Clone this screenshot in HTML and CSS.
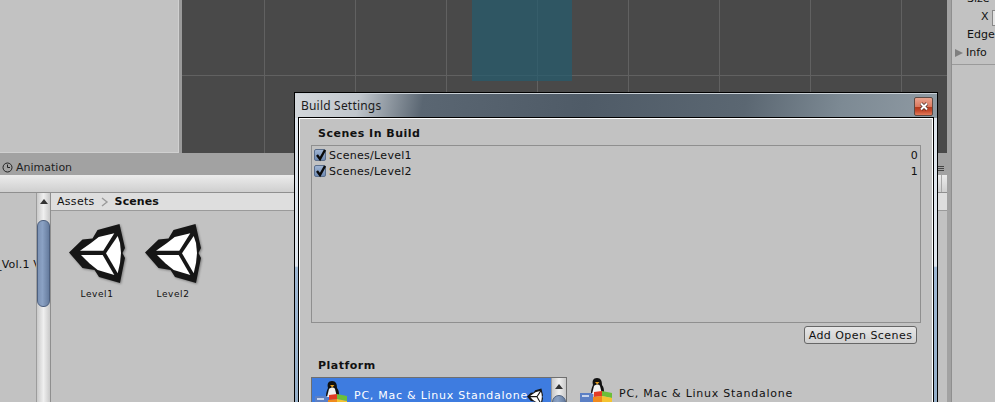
FILE: index.html
```html
<!DOCTYPE html>
<html lang="en">

<head>
	<meta charset="UTF-8">
	<title>Build Settings</title>
	<link rel="stylesheet" href="styles.css">
</head>

<body>
	<svg class="defs" width="0" height="0">
		<symbol id="unity" viewBox="0 0 56 62">
			<path fill="#161616" d="M0 29.5 L13.5 16.5 L23.5 15.5 L28.5 7 L50.5 1 L56 25 L53.5 30 L56 35 L51 60 L30 54 L25.5 47 L13.5 45 Z"/>
			<path fill="#fff" d="M11 27.7 L22 20 L29.7 14 L45.3 10.3 L34.3 27.7 Z"/>
			<path fill="#fff" d="M48.7 13 L37 30.3 L48.7 50.3 L51 40 L52 30 L51 20 Z"/>
			<path fill="#fff" d="M12 32 L33.7 32 L45.3 52 L28.7 47 L20.3 40.3 Z"/>
		</symbol>
		<symbol id="tux" viewBox="0 0 32 24">
			<path fill="#5b7fc4" d="M0 15 L13 15 V24 H0 Z"/>
			<path fill="#c7d4ec" d="M2 17 H9 V19 H2 Z"/>
			<path fill="#111" d="M17 0 C21 0 22 3 22 7 C24 9 24 12 24 15 H11 C11 12 12 9 13 7 C12 3 13 0 17 0 Z"/>
			<path fill="#f2f2f2" d="M14 8 C16 6 19 6 20 8 L22 16 H12 Z"/>
			<path fill="#e8a020" d="M15 4 H19.5 L17.2 6.5 Z"/>
			<path fill="#e33b24" d="M14 14 L22 13 V18 L14 19 Z"/>
			<path fill="#6cbf38" d="M22 13 L32 15 V20 L22 18 Z"/>
			<path fill="#f08a1d" d="M13 19 L22 18 V24 H13 Z"/>
			<path fill="#f4c430" d="M22 18 L32 20 V24 H22 Z"/>
		</symbol>
	</svg>

	<div class="editor">
		<div class="top-row">
			<div class="left-pane"></div>
			<div class="scene">
				<div class="scene-rect"></div>
			</div>
		</div>
		<div class="bottom-area">
			<div class="tab-strip">
				<svg class="clock" width="11" height="11" viewBox="0 0 11 11">
					<circle cx="5.5" cy="5.5" r="4.5" fill="none" stroke="#222"/>
					<path d="M5.5 2.5 V5.5 H8" fill="none" stroke="#222"/>
				</svg>
				<span>Animation</span>
				<svg class="tab-menu" width="6" height="5" viewBox="0 0 6 5">
					<path d="M0 .5 H6 M0 2.5 H6 M0 4.5 H6" stroke="#444"/>
				</svg>
			</div>
			<div class="toolbar"><i class="toolbar-sep"></i></div>
			<div class="browser">
				<div class="tree"><span class="tree-label">_Vol.1 V</span></div>
				<div class="tree-scroll">
					<div class="scroll-arrow"></div>
					<div class="scroll-thumb"></div>
				</div>
				<div class="assets">
					<div class="crumbs">
						<span>Assets</span>
						<svg class="crumb-sep" width="8" height="10" viewBox="0 0 8 10">
							<path d="M1 1 L6 5 L1 9" fill="none" stroke="#9a9a9a" stroke-width="1.4"/>
						</svg>
						<b>Scenes</b>
					</div>
					<div class="asset-grid">
						<div class="asset">
							<svg class="asset-icon"><use href="#unity"/></svg>
							<span>Level1</span>
						</div>
						<div class="asset">
							<svg class="asset-icon"><use href="#unity"/></svg>
							<span>Level2</span>
						</div>
					</div>
				</div>
			</div>
		</div>
		<div class="inspector">
			<div class="insp-rows">
				<div class="insp-row size">Size</div>
				<div class="insp-row axis">X<i class="field"></i></div>
				<div class="insp-row">Edge</div>
				<div class="insp-row info"><i class="fold"></i>Info</div>
			</div>
		</div>
	</div>

	<!-- the dialog floats over the editor -->
	<div class="dialog">
		<div class="titlebar">
			<span class="title">Build Settings</span>
			<div class="close-btn">
				<svg width="10" height="9" viewBox="0 0 10 9">
					<path d="M2 1.5 L8 7.5 M8 1.5 L2 7.5" stroke="#4a2a22" stroke-width="3.4"/>
					<path d="M2 1.5 L8 7.5 M8 1.5 L2 7.5" stroke="#fff" stroke-width="2"/>
				</svg>
			</div>
		</div>
		<div class="client">
			<h2 class="section">Scenes In Build</h2>
			<div class="scene-list">
				<div class="scene-row">
					<i class="check"><svg width="13" height="13" viewBox="0 0 13 13"><path d="M3 6 L6 10 L11 1" fill="none" stroke="#0a0a0a" stroke-width="2.4"/></svg></i>
					<span class="scene-name">Scenes/Level1</span>
					<span>0</span>
				</div>
				<div class="scene-row">
					<i class="check"><svg width="13" height="13" viewBox="0 0 13 13"><path d="M3 6 L6 10 L11 1" fill="none" stroke="#0a0a0a" stroke-width="2.4"/></svg></i>
					<span class="scene-name">Scenes/Level2</span>
					<span>1</span>
				</div>
			</div>
			<div class="list-actions">
				<button class="open-btn">Add Open Scenes</button>
			</div>
			<h2 class="section platform-head">Platform</h2>
			<div class="platform">
				<div class="platform-list">
					<div class="platform-item">
						<svg class="tux"><use href="#tux"/></svg>
						<span class="platform-name">PC, Mac &amp; Linux Standalone</span>
						<svg class="item-logo"><use href="#unity"/></svg>
					</div>
					<div class="platform-scroll">
						<div class="scroll-arrow"></div>
						<div class="platform-thumb"></div>
					</div>
				</div>
				<div class="platform-detail">
					<svg class="tux detail-icon"><use href="#tux"/></svg>
					<span>PC, Mac &amp; Linux Standalone</span>
				</div>
			</div>
		</div>
	</div>
</body>

</html>
```

FILE: styles.css
```css
html,
body {
	height: 100%;
}

body {
	margin: 0;
	overflow: hidden;
	background-color: #a2a2a2;
	font-family: 'DejaVu Sans', sans-serif;
	font-size: 11px;
	color: #111;
}

.defs {
	display: block;
	height: 0;
}

.editor {
	display: grid;
	grid-template-columns: 947px 1fr;
	grid-template-rows: 153px 1fr;
	column-gap: 4px;
	height: 402px;
}

.top-row {
	display: flex;
	gap: 3px;
	background-color: #9a9a9a;
}

.left-pane {
	width: 179px;
	background-color: #c2c2c2;
	border-right: 1px solid #d0d0d0;
	border-bottom: 1px solid #d0d0d0;
	box-sizing: border-box;
}

.scene {
	position: relative;
	flex: 1;
	background-color: #494949;
	background-image:
		linear-gradient(#616161, #616161),
		linear-gradient(to right, #616161 1px, transparent 1px);
	background-size: 100% 1px, 91px 100%;
	background-position: 0 75px, 82px 0;
	background-repeat: no-repeat, repeat-x;
}

.scene-rect {
	position: absolute;
	left: 290px;
	top: 0;
	width: 100px;
	height: 81px;
	background-color: rgba(38, 92, 110, 0.72);
}

.inspector {
	grid-column: 2;
	grid-row: 1 / span 2;
	background-color: #c2c2c2;
	border-left: 1px solid #8f8f8f;
	overflow: hidden;
}

.insp-rows {
	height: 75px;
	box-sizing: border-box;
	border-bottom: 1px solid #9a9a9a;
	margin-top: -10px;
}

.insp-row {
	height: 18px;
	padding-left: 15px;
	line-height: 18px;
	white-space: nowrap;
	overflow: hidden;
}

.axis {
	display: flex;
	gap: 3px;
	padding-left: 29px;
}

.field {
	flex: none;
	width: 12px;
	height: 14px;
	margin-top: 2px;
	background-color: #e4e4e4;
	border: 1px solid #888;
}

.info {
	display: flex;
	align-items: center;
	gap: 3px;
	padding-left: 3px;
}

.fold {
	width: 0;
	height: 0;
	border-left: 8px solid #7f7f7f;
	border-top: 4px solid transparent;
	border-bottom: 4px solid transparent;
}

.bottom-area {
	grid-column: 1;
	grid-row: 2;
	display: flex;
	flex-direction: column;
	min-height: 0;
}

.tab-strip {
	display: flex;
	align-items: center;
	gap: 3px;
	height: 22px;
	padding: 6px 3px 0 2px;
	box-sizing: border-box;
	color: #222;
}

.tab-menu {
	margin-left: auto;
	margin-top: 2px;
}

.toolbar {
	display: flex;
	justify-content: flex-end;
	height: 17px;
	background: linear-gradient(#ececec, #cfcfcf);
	border-bottom: 1px solid #8f8f8f;
}

.toolbar-sep {
	width: 5px;
	border-left: 1px solid #a8a8a8;
}

.browser {
	display: flex;
	flex: 1;
	min-height: 0;
	background-color: #c2c2c2;
}

.tree {
	width: 36px;
	overflow: hidden;
	white-space: nowrap;
}

.tree-label {
	display: block;
	margin: 65px 0 0 -4px;
	letter-spacing: 0.2px;
}

.tree-scroll {
	width: 13px;
	background: linear-gradient(to right, #c9c9c9, #efefef 50%, #c9c9c9);
	border-left: 1px solid #9c9c9c;
	border-right: 1px solid #8f8f8f;
}

.scroll-arrow {
	width: 0;
	height: 0;
	margin: 6px auto 0;
	border-bottom: 5px solid #333;
	border-left: 4px solid transparent;
	border-right: 4px solid transparent;
}

.scroll-thumb {
	height: 87px;
	margin-top: 16px;
	background: linear-gradient(to right, #7c92b4, #8ba2c4 40%, #667c9e);
	border: 1px solid #4c5f7e;
	border-radius: 6px;
	box-sizing: border-box;
}

.assets {
	flex: 1;
}

.crumbs {
	display: flex;
	align-items: center;
	gap: 6px;
	height: 17px;
	padding-left: 6px;
	background-color: #dedede;
	border-bottom: 1px solid #9a9a9a;
	letter-spacing: 0.3px;
}

.crumbs b {
	letter-spacing: 0.1px;
}

.asset-grid {
	display: flex;
	gap: 20px;
	padding: 12px 0 0 18px;
}

.asset {
	display: flex;
	flex-direction: column;
	align-items: center;
	gap: 4px;
	width: 56px;
	font-size: 9px;
	letter-spacing: 0.6px;
}

.asset-icon {
	width: 56px;
	height: 62px;
	filter: drop-shadow(1px 1px 1px rgba(0, 0, 0, 0.35));
}

/* dialog */
.dialog {
	position: absolute;
	left: 294px;
	top: 92px;
	width: 644px;
	height: 310px;
	overflow: hidden;
	box-sizing: border-box;
	padding: 0 4px;
	background: linear-gradient(#dfe6ee 0, #dfe6ee 56%, #9fb8d4 56.5%, #94aec8 100%);
	border: 1px solid #000;
	border-bottom: none;
}

.titlebar {
	display: flex;
	justify-content: space-between;
	height: 25px;
	padding: 0 4px 0 6px;
	margin: 0 -4px;
	background: linear-gradient(100deg, #d3d7db 0, #c0c6cc 10%, #5a6672 20%, #4f5b67 45%, #5b6772 70%, #7d8a94 85%, #8f9aa3 100%);
	box-shadow: inset 0 1px 0 #c9d0d6;
}

.title {
	padding-top: 4px;
	font-family: 'Noto Sans', sans-serif;
	font-size: 12px;
	letter-spacing: 0.2px;
	color: #1c1c1c;
}

.close-btn {
	display: flex;
	align-items: center;
	justify-content: center;
	width: 19px;
	height: 19px;
	margin-top: 4px;
	box-sizing: border-box;
	border: 1px solid #5d4a44;
	border-radius: 2px;
	background: linear-gradient(#e9a48f 0, #dc7a60 50%, #b23a1c 55%, #c4482a 75%, #e27a5a 100%);
}

.client {
	height: 290px;
	box-sizing: border-box;
	overflow: hidden;
	padding: 0 11px;
	background-color: #c2c2c2;
	border: 1px solid #fff;
	outline: 1px solid #000;
}

.section {
	margin: 0;
	padding: 8px 0 0 7px;
	height: 14px;
	line-height: 14px;
	font-size: 11px;
	font-weight: bold;
	letter-spacing: 0.5px;
}

.scene-list {
	height: 178px;
	margin-top: 4px;
	box-sizing: border-box;
	border: 1px solid #8f8f8f;
	padding: 1px 2px 0 2px;
	letter-spacing: 0.3px;
}

.scene-row {
	display: flex;
	align-items: center;
	gap: 3px;
	height: 16px;
}

.scene-name {
	flex: 1;
}

.check {
	display: block;
	width: 12px;
	height: 12px;
	box-sizing: border-box;
	background: linear-gradient(#9fb4d3, #6f8bb4);
	border: 1px solid #5a6e8c;
	border-radius: 2px;
}

.check svg {
	display: block;
	margin: -1px;
}

.list-actions {
	display: flex;
	justify-content: flex-end;
	padding: 3px 4px 0 0;
}

.open-btn {
	width: 113px;
	height: 18px;
	padding: 0;
	font-family: 'DejaVu Sans', sans-serif;
	font-size: 11px;
	letter-spacing: 0.45px;
	color: #111;
	background: linear-gradient(#e6e6e6, #cfcfcf);
	border: 1px solid #666;
	border-radius: 3px;
}

.platform-head {
	padding-top: 15px;
}

.platform {
	display: flex;
	gap: 13px;
	margin-top: 4px;
}

.platform-list {
	display: flex;
	width: 256px;
	height: 60px;
	box-sizing: border-box;
	border: 1px solid #6f6f6f;
}

.platform-item {
	display: flex;
	align-items: flex-start;
	flex: 1;
	min-width: 0;
	height: 40px;
	overflow: hidden;
	color: #fff;
	background-color: #3e7ce0;
	letter-spacing: 0.75px;
}

.tux {
	flex: none;
	width: 32px;
	height: 24px;
	margin: 3px 0 0 3px;
}

.platform-name {
	flex: none;
	width: 173px;
	margin: 11px 0 0 7px;
	white-space: nowrap;
}

.item-logo {
	flex: none;
	width: 16px;
	height: 18px;
	margin: 10px 8px 0 auto;
}

.platform-scroll {
	flex: none;
	width: 15px;
	box-sizing: border-box;
	background: linear-gradient(to right, #c9c9c9, #efefef 50%, #c9c9c9);
	border-left: 1px solid #9c9c9c;
}

.platform-thumb {
	height: 30px;
	margin-top: 6px;
	background: linear-gradient(to right, #7c92b4, #8ba2c4 40%, #667c9e);
	border: 1px solid #4c5f7e;
	border-radius: 7px;
	box-sizing: border-box;
}

.platform-detail {
	display: flex;
	align-items: flex-start;
	gap: 7px;
	letter-spacing: 0.75px;
}

.detail-icon {
	margin: 1px 0 0;
}

.platform-detail span {
	margin-top: 10px;
	white-space: nowrap;
}
```
